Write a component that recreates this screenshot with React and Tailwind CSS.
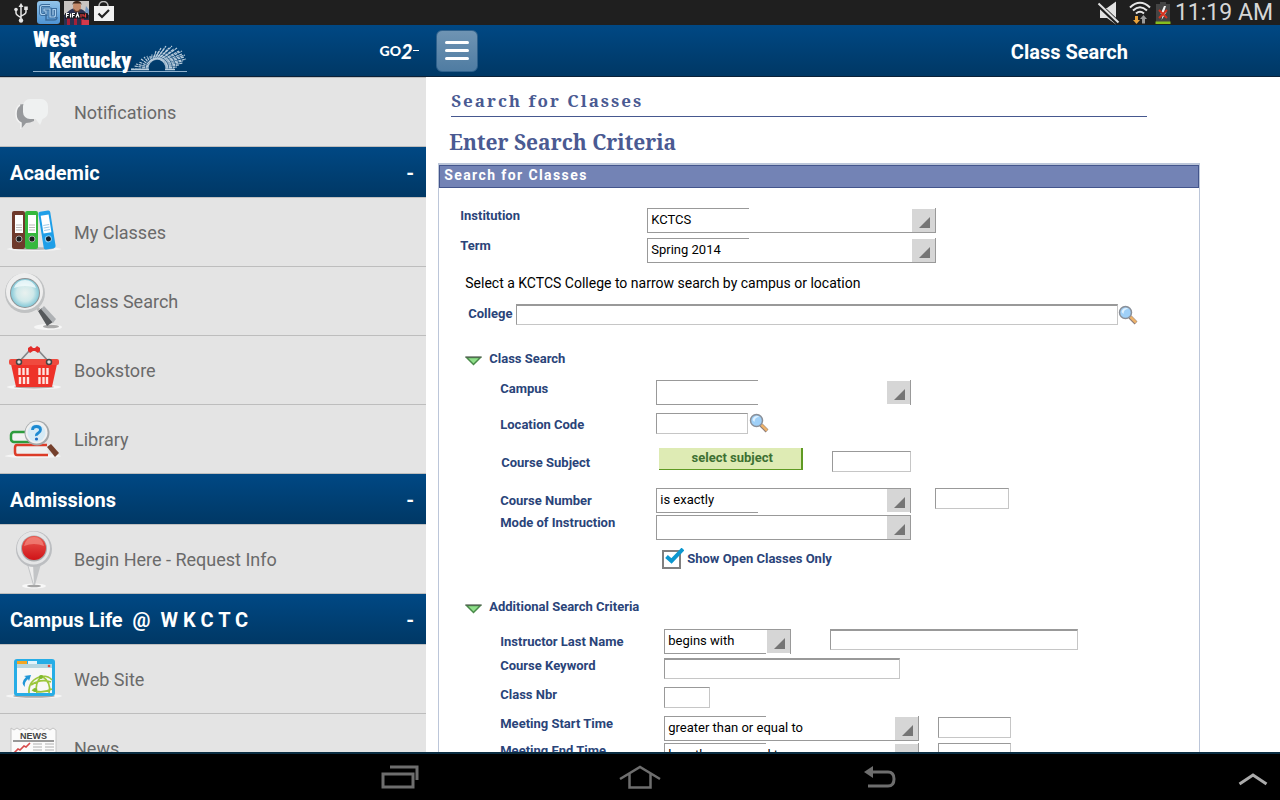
import React from 'react'

const barGradient = 'bg-linear-to-b from-[#004884] to-[#003865]'

/* ---------- status bar ---------- */

function StatusBar() {
  return (
    <div className="flex h-[25px] shrink-0 items-center justify-between overflow-hidden bg-[#1f1f1f] pl-3 pr-[7px]">
      <div className="flex items-center gap-1">
        <svg width="18" height="22" viewBox="0 0 18 22" fill="none" stroke="#e6e6e6" strokeWidth="1.5">
          <path d="M9 4v14M4 8v3q0 2 5 4.500M14 7v3q0 2-5 4" />
          <path d="M9 1l2.500 4h-5z" fill="#e6e6e6" stroke="none" />
          <circle cx="9" cy="18.500" r="2.200" fill="#e6e6e6" stroke="none" />
          <circle cx="4" cy="7.500" r="1.800" fill="#e6e6e6" stroke="none" />
          <path d="M12.200 4.500h3.600v3.600h-3.600z" fill="#e6e6e6" stroke="none" />
        </svg>
        <svg width="26" height="24" viewBox="0 0 26 24" className="ml-0.5">
          <defs>
            <linearGradient id="cu" x1="0" y1="0" x2="0" y2="1">
              <stop offset="0" stopColor="#94c5ea" />
              <stop offset="1" stopColor="#4d93d3" />
            </linearGradient>
          </defs>
          <rect x="1" y="0" width="23" height="23" rx="3" fill="url(#cu)" />
          <path d="M14 4.500H6.500a2 2 0 0 0-2 2v5a2 2 0 0 0 2 2H10V10H8V8h6v8h3.500a2 2 0 0 0 2-2V8.500H17V14" fill="none" stroke="#3b6d9e" strokeWidth="3" />
          <path d="M14 4.500H6.500a2 2 0 0 0-2 2v5a2 2 0 0 0 2 2H10V10H8V8h6v8h3.500a2 2 0 0 0 2-2V8.500H17V14" fill="none" stroke="#a9cfee" strokeWidth="1.200" />
          <path d="M10 13v6h8a3 3 0 0 0 3-3" fill="none" stroke="#3b6d9e" strokeWidth="1.500" />
        </svg>
        <svg width="25" height="24" viewBox="0 0 25 24" className="-ml-0.5">
          <rect width="25" height="24" fill="#c9c5c2" />
          <path d="M0 14l6-5 6-3 7 3 6 5v10H0z" fill="#2b3150" />
          <path d="M3 15h3v9H3zM10 17h3v7h-3zM17 16h3v8h-3z" fill="#a3213a" />
          <ellipse cx="13" cy="5.500" rx="4" ry="5.500" fill="#c48a6a" />
          <path d="M8.500 4q0-4 4.500-4t4.500 4l-1-1.500h-7z" fill="#3b2418" />
          <path d="M10 8q3 4 6 0v2q-3 3-6 0z" fill="#5d3a28" />
          <rect x="1" y="12" width="23" height="5.500" fill="#15171d" />
          <path d="M2.500 16.500v-4H5M2.500 14.500h2M6.500 12.500v4M8.500 16.500v-4H11M8.500 14.500h2M12 16.500l1.500-4 1.500 4" fill="none" stroke="#fff" strokeWidth="1.200" />
          <path d="M17 13v3.500M19 13v2h2.500v-2.500v4" fill="none" stroke="#e53b3b" strokeWidth="1.200" />
          <path d="M18 19h7v5h-7z" fill="#d43a4c" />
          <path d="M22 5l3 4v4l-4-2z" fill="#6f95c0" />
        </svg>
        <svg width="22" height="24" viewBox="0 0 22 24">
          <path d="M6 7V5a4.500 4.500 0 0 1 9 0v2" fill="none" stroke="#bdbdbd" strokeWidth="1.500" />
          <path d="M1 5h20v15H1z" fill="#f2f2f2" />
          <path d="M5.500 12.500l3.500 3.500 7-7" fill="none" stroke="#222" strokeWidth="2.200" />
        </svg>
      </div>
      <div className="flex items-center gap-1">
        <svg width="24" height="24" viewBox="0 0 24 24" className="mr-1">
          <path d="M3 7h7l9-6.500v23L10 17H3z" fill="#e2e2e2" />
          <path d="M1 3l20 19" stroke="#1f1f1f" strokeWidth="5" />
          <path d="M1.500 2.500l20 19" stroke="#e2e2e2" strokeWidth="2" />
        </svg>
        <svg width="22" height="24" viewBox="0 0 22 24" fill="none" stroke="#e6e6e6" strokeWidth="2">
          <path d="M1 6.500q10-9.500 20 0M4 9.500q7-6.500 14 0M7 12.500q4-3.500 8 0" />
          <path d="M6 15h3v4h2l-3.500 4L4 19h2z" fill="#e9a23b" stroke="none" />
          <path d="M13 22.500h3V18h2l-3.500-4-3.500 4h2z" fill="#9b9b9b" stroke="none" />
        </svg>
        <svg width="16" height="24" viewBox="0 0 16 24">
          <path d="M5 1h6v2h4v20H1V3h4z" fill="#444" />
          <path d="M0.500 20.500h15v2.500h-15z" fill="#85bd1f" />
          <path d="M9 5L5.500 13H8l-1.500 6 5-8H9l2-6z" fill="#f4f4f4" />
          <path d="M4 9l8 8M12 9l-8 8" stroke="#d8321e" strokeWidth="2" />
        </svg>
        <span className="text-[23px] leading-6 text-[#d6d6d6]">11:19 AM</span>
      </div>
    </div>
  )
}

/* ---------- top bar ---------- */

// outline of the sunburst, from the left tip over the top to the right foot
const fanEdge = [
  [0, 24], [3, 21], [5, 19], [8, 17], [10, 14], [13, 12], [16, 11], [19, 11], [21, 9], [24, 9],
  [25, 6], [28, 6], [30, 3], [33, 4], [35, 1], [38, 3], [41, 1], [43, 4], [46, 3], [48, 6],
  [51, 6], [51, 9], [54, 10], [53, 12], [55, 14], [52, 16], [52, 18], [48, 20], [46, 22], [43, 24],
]

function SunFan() {
  return (
    <svg width="56" height="26" viewBox="0 0 56 26" stroke="#b9cddd">
      {fanEdge.map(([x, y], i) => {
        const a = Math.PI * (1 - i / (fanEdge.length - 1))
        return (
          <line key={i} x1={26 + Math.cos(a) * 8.5} y1={24 - Math.sin(a) * 9.5} x2={x} y2={y} strokeWidth="1.200" strokeDasharray="3 0.600" />
        )
      })}
      <path d="M0 24.500h18M34 24.500h10" strokeWidth="1.500" />
    </svg>
  )
}

function TopBar() {
  return (
    <header className={`flex h-[52px] shrink-0 items-center border-b border-[#0b2138] ${barGradient}`}>
      <div className="flex w-1/3 items-center justify-between pl-[33px] pr-2">
        <div className="flex items-end border-b border-[#8fb0cc] text-white">
          <div className="font-['Impact','Liberation_Sans_Narrow','Roboto_Condensed',Roboto,sans-serif] text-[22px] font-black leading-[21px]">
            <div>West</div>
            <div className="pl-4">Kentucky</div>
          </div>
          <SunFan />
        </div>
        <div className="flex items-center font-['Lato',sans-serif] text-white">
          <span className="text-sm font-black">GO</span>
          <span className="text-xl font-black italic leading-5">2</span>
          <span className="w-1.5 border-b border-white" />
        </div>
      </div>
      <div className="flex flex-1 items-center justify-between pl-[9px] pr-[152px]">
        <button aria-label="Menu" className="flex size-[42px] flex-col items-center justify-center gap-[5px] rounded-md border border-[#2f618c] bg-linear-to-b from-[#6f94b3] to-[#4f7ca2]">
          <span className="h-[3px] w-6 rounded-sm bg-white" />
          <span className="h-[3px] w-6 rounded-sm bg-white" />
          <span className="h-[3px] w-6 rounded-sm bg-white" />
        </button>
        <h1 className="pt-0.5 text-xl font-bold text-white">Class Search</h1>
      </div>
    </header>
  )
}

/* ---------- sidebar icons, all drawn on a 68x68 box ---------- */

const icons = {
  chat: (
    <g transform="translate(0 8)">
      <path d="M16 25q0-8 8-8h6v15h4v2q-4 2-8 2l-5 6v-6q-5-2-5-11z" fill="#97999c" />
      <path d="M21 42v-6q-5-2-5-9q0-7 4-9" fill="none" stroke="#f4f4f4" strokeWidth="1.500" />
      <rect x="23" y="12" width="25" height="20" rx="7" fill="#eff1f1" />
      <path d="M35 31h8l-3 7z" fill="#eff1f1" />
    </g>
  ),
  binders: (
    <>
      <ellipse cx="34" cy="50" rx="27" ry="2" fill="#f3f3f3" />
      <ellipse cx="34" cy="49.500" rx="20" ry="1.500" fill="#b5b5b5" />
      <rect x="12" y="12" width="13" height="38" rx="2" fill="#6f3a2c" />
      <rect x="15" y="16" width="8" height="18" fill="#fff" />
      <rect x="25" y="12" width="13" height="38" rx="2" fill="#35b83d" />
      <rect x="28" y="16" width="8" height="18" fill="#fff" />
      <path d="M16 26h6M16 28.500h6M16 31h6M29 26h6M29 28.500h6M29 31h6" stroke="#bbb" />
      <g transform="rotate(-9 47 31)">
        <rect x="41" y="12" width="12" height="38" rx="2" fill="#1f9fe8" />
        <rect x="43" y="16" width="8" height="18" fill="#fff" />
        <path d="M44 26h6M44 28.500h6M44 31h6" stroke="#9fc9e6" />
        <circle cx="47" cy="40" r="3" fill="#14202a" stroke="#8fd0f5" />
      </g>
      <circle cx="19" cy="40" r="3" fill="#1c1c1c" stroke="#aaa" />
      <circle cx="32" cy="40" r="3" fill="#1c1c1c" stroke="#aaa" />
    </>
  ),
  magnifier: (
    <>
      <ellipse cx="48" cy="59" rx="14" ry="3" fill="#f6f6f6" />
      <ellipse cx="51" cy="58.500" rx="8" ry="1.800" fill="#aaa" />
      <path d="M38 43l4-3 11 14-6 4z" fill="#55585b" />
      <path d="M41 41l3-3 12 13-3 4z" fill="#aeb1b4" />
      <path d="M35 37l4 5" stroke="#bbb" strokeWidth="3" />
      <circle cx="25" cy="25" r="20" fill="#c0c2c3" />
      <circle cx="24.500" cy="23.500" r="18.500" fill="#eeeeee" />
      <circle cx="25" cy="25" r="15" fill="#8d9193" />
      <circle cx="25" cy="25" r="14" fill="url(#glass)" />
      <path d="M14 20q3-8 11-8t11 8q-11-4-22 0z" fill="#f2fbfc" opacity="0.800" />
    </>
  ),
  basket: (
    <g transform="translate(0 3)">
      <ellipse cx="34" cy="47" rx="27" ry="2.500" fill="#f5f5f5" />
      <ellipse cx="34" cy="47" rx="20" ry="1.500" fill="#b3a5a5" />
      <path d="M19 22L30 10M49 22L38 10" stroke="#85888a" strokeWidth="1.800" />
      <path d="M28 8l3-2 2 2h2l2-2 3 2v3l-2 2-3-2h-2l-3 2-2-2z" fill="#e22d2a" />
      <path d="M11 24h46l-5 23H16z" fill="#ee3229" />
      <rect x="9" y="19" width="50" height="6" rx="2" fill="#f04a3e" />
      <path d="M19.500 28v7M23.500 28v7M27.500 28v7M39.500 28v7M43.500 28v7M47.500 28v7M20 37v7M24 37v7M28 37v7M39.500 37v7M43.500 37v7M47 37v7" stroke="#ffe4e0" strokeWidth="2.400" />
      <circle cx="19" cy="22" r="2.500" fill="#ddd" stroke="#454545" strokeWidth="1.500" />
      <circle cx="49" cy="22" r="2.500" fill="#ddd" stroke="#454545" strokeWidth="1.500" />
    </g>
  ),
  library: (
    <g transform="translate(0 3)">
      <ellipse cx="33" cy="47" rx="28" ry="2" fill="#f5f5f5" />
      <rect x="11" y="23" width="26" height="10" rx="3" fill="#f2f2f2" stroke="#2d9c3d" strokeWidth="2.500" />
      <path d="M47 36H17q-2 0-2 3v4q0 3 2 3h31" fill="#efefef" stroke="#dc3c28" strokeWidth="2.500" />
      <path d="M47 38l4-3 8 9-4 4z" fill="#75402c" />
      <circle cx="37" cy="24" r="12.500" fill="#a5a9ab" />
      <circle cx="36.500" cy="23.500" r="11" fill="#f0f0f0" />
      <circle cx="36.500" cy="24" r="9" fill="#d5eaf5" />
      <path d="M32.500 21q0-3.500 4-3.500t4 3.200q0 2-2.200 3.200t-1.800 3" fill="none" stroke="#1d8ad2" strokeWidth="2.800" />
      <circle cx="36.500" cy="30" r="1.600" fill="#1d6fc2" />
    </g>
  ),
  pin: (
    <>
      <ellipse cx="34" cy="60" rx="12" ry="2.500" fill="#f8f8f8" />
      <ellipse cx="34" cy="60" rx="7" ry="1.300" fill="#a5a5a5" />
      <path d="M27 38h14l-6 21h-2z" fill="#c2c4c6" />
      <path d="M28 38h5l1 21z" fill="#eeeeee" />
      <circle cx="34" cy="23" r="18" fill="#bcbec1" />
      <circle cx="33.500" cy="22" r="16.500" fill="#e4e5e6" />
      <circle cx="34" cy="22.500" r="13" fill="#a8abad" />
      <circle cx="34" cy="22" r="12" fill="url(#pinred)" />
      <path d="M24 20q2-9 10-9t10 9q-10-4-20 0z" fill="#f48a80" opacity="0.700" />
    </>
  ),
  web: (
    <g transform="translate(0 1)">
      <ellipse cx="34" cy="49" rx="28" ry="2.500" fill="#f5f5f5" />
      <ellipse cx="34" cy="49" rx="21" ry="1.800" fill="#a9a9a9" />
      <rect x="14" y="12" width="41" height="37" rx="3" fill="#27ade6" />
      <rect x="17" y="14" width="10" height="3" fill="#f4a623" />
      <rect x="28" y="14" width="9" height="3" fill="#e3f4fb" />
      <rect x="17" y="17" width="35" height="4" fill="#b7d5df" />
      <rect x="17" y="21" width="35" height="25" fill="#f7f7f7" />
      <circle cx="49" cy="19" r="1.300" fill="#e2483c" />
      <g fill="none" stroke="#9cc63c" strokeWidth="1.700">
        <path d="M29 46q-1-13 13-17q7 0 10 4M31 38q10-7 20-3M37 46q-3-10 5-17q10 7 7 17M32 43q10 4 20-1" />
      </g>
      <path d="M25 40q-5-4 1-10l-2-1 7-1-2 6-1-2q-4 3-3 8z" fill="#2196d6" />
      <circle cx="41" cy="30" r="2" fill="#7fb92e" />
      <circle cx="35" cy="43" r="2" fill="#7fb92e" />
    </g>
  ),
  news: (
    <>
      <path d="M11 13l3 2 3-2 3 2 3-2 3 2 3-2 3 2 3-2 3 2 3-2 3 2 3-2 3 2 3-2 3 2v50H11z" fill="#fbfbfb" stroke="#c4c4c4" />
      <text x="20" y="24" fontSize="9" fontWeight="700" fontFamily="Liberation Sans, Arial, sans-serif" fill="#444">NEWS</text>
      <path d="M13 26h41" stroke="#777" strokeWidth="1.500" />
      <path d="M33 29h9M33 32h9M33 35h9M33 38h9M45 29h9M45 32h9M45 35h9M45 38h9" stroke="#c9c9c9" strokeWidth="1.500" />
      <path d="M14 38l4-4 2 1 4-4 2 1 4-4" fill="none" stroke="#d64a4a" strokeWidth="1.600" />
    </>
  ),
}

const sections = [
  { items: [{ icon: 'chat', text: 'Notifications' }] },
  {
    title: 'Academic',
    items: [
      { icon: 'binders', text: 'My Classes' },
      { icon: 'magnifier', text: 'Class Search' },
      { icon: 'basket', text: 'Bookstore' },
      { icon: 'library', text: 'Library' },
    ],
  },
  { title: 'Admissions', items: [{ icon: 'pin', text: 'Begin Here - Request Info' }] },
  {
    title: 'Campus Life  @  W K C T C',
    items: [
      { icon: 'web', text: 'Web Site' },
      { icon: 'news', text: 'News' },
    ],
  },
]

function Sidebar() {
  return (
    <nav className="w-[33.3%] shrink-0 overflow-hidden bg-[#e4e4e4]">
      <svg width="0" height="0" className="absolute">
        <defs>
          <radialGradient id="glass">
            <stop offset="0" stopColor="#e9f1ef" />
            <stop offset="0.600" stopColor="#d0e9ea" />
            <stop offset="1" stopColor="#86c9d8" />
          </radialGradient>
          <linearGradient id="pinred" x1="0" y1="0" x2="0" y2="1">
            <stop offset="0" stopColor="#ea5a50" />
            <stop offset="1" stopColor="#d01318" />
          </linearGradient>
        </defs>
      </svg>
      {sections.map((section, i) => (
        <div key={i}>
          {section.title && (
            <button className={`flex h-[50px] w-full items-center justify-between px-2.5 pr-3 pt-0.5 text-xl font-bold text-white ${barGradient}`}>
              <span className="whitespace-pre">{section.title}</span>
              <span>-</span>
            </button>
          )}
          <ul className="border-t border-[#c0c0c0]">
            {section.items.map((item) => (
              <li key={item.text} className="h-[69px] border-b border-[#bdbdbd]">
                <a href="#" className="flex h-full items-center text-lg text-[#6a6a6a]">
                  <svg width="68" height="68" viewBox="0 -1 68 68" className="shrink-0">
                    {icons[item.icon]}
                  </svg>
                  <span className="pl-1.5 pt-0.5">{item.text}</span>
                </a>
              </li>
            ))}
          </ul>
        </div>
      ))}
    </nav>
  )
}

/* ---------- form pieces ---------- */

const labelClass = 'shrink-0 text-[13px] font-bold leading-4 text-[#2a4479]'

function Lookup() {
  return (
    <button type="button" aria-label="Look up" className="shrink-0">
      <svg width="20" height="20" viewBox="0 0 20 20">
        <path d="M12 12l6 6" stroke="#8c7b78" strokeWidth="4" />
        <path d="M12 11.500l6 6" stroke="#eeb36a" strokeWidth="2.500" />
        <circle cx="7.500" cy="7.500" r="6" fill="#9fd0f8" stroke="#8a8f98" strokeWidth="1.500" />
        <path d="M3.500 7q1-4 5-4l2 1q-5 0-5 5z" fill="#e0f2ff" />
      </svg>
    </button>
  )
}

function Select({ id, value, width, top = 'part', bottom = 'full' }) {
  return (
    <div className={`relative h-[25px] shrink-0 border-x border-[#999] ${width}`}>
      <select id={id} defaultValue={value} className="block h-full w-full appearance-none bg-white pb-0.5 pl-[3px] text-[13px] leading-5 text-black outline-none">
        <option>{value}</option>
      </select>
      <span className="pointer-events-none absolute bottom-px right-0 top-px w-[23px] bg-[#d6d6d6]">
        <svg width="23" height="23" viewBox="0 0 23 23">
          <path d="M18 8v11H7z" fill="#757575" />
        </svg>
      </span>
      <span className={`absolute left-0 top-0 h-px bg-[#999] ${top === 'full' ? 'w-full' : 'w-[101px]'}`} />
      {bottom === 'full' && <span className="absolute bottom-0 left-0 h-px w-full bg-[#999]" />}
      {bottom === 'part' && <span className="absolute bottom-0 left-0 h-px w-[101px] bg-[#999]" />}
    </div>
  )
}

function TextBox({ id, label, className }) {
  return (
    <input
      id={id}
      type="text"
      aria-label={label}
      className={`h-[21px] border border-b-[#c6c6c6] border-l-[#999] border-r-[#c6c6c6] border-t-[#999] bg-white px-1 text-[13px] outline-none ${className}`}
    />
  )
}

function Row({ id, label, labelWidth, labelPad = '', className, children }) {
  return (
    <div className={`flex items-start ${className}`}>
      <label htmlFor={id} className={`${labelClass} ${labelWidth} ${labelPad}`}>{label}</label>
      {children}
    </div>
  )
}

function GroupTitle({ children, className }) {
  return (
    <h3 className={`flex items-center gap-[7px] pl-[26px] ${labelClass} ${className}`}>
      <svg width="17" height="16" viewBox="0 0 17 16">
        <path d="M1.500 6.500h14L8.500 13.500z" fill="#8fe08a" stroke="#4a8a4a" strokeWidth="1.500" />
        <path d="M0.500 6h16" stroke="#555" />
      </svg>
      {children}
    </h3>
  )
}

function SearchForm() {
  return (
    <main className="flex-1 overflow-hidden bg-white pl-3 pr-20">
      <h2 className="ml-[13px] mr-[53px] border-b border-[#46588f] pb-[3px] pt-3 font-['Noto_Serif','Droid_Serif','DejaVu_Serif',serif] text-[17px] font-bold leading-6 tracking-[2px] text-[#4a5a92]">
        Search for Classes
      </h2>
      <h2 className="ml-[11px] pb-2 pt-3 font-['Noto_Serif','Droid_Serif','DejaVu_Serif',serif] text-[21px] font-bold leading-[26px] text-[#4a5a92]">
        Enter Search Criteria
      </h2>

      <form className="border-x border-t-2 border-[#bcc6d9] pb-4">
        <h3 className="h-[23px] border border-[#43558c] bg-[#7383b5] px-1 text-sm font-bold leading-[18px] tracking-widest text-white">
          Search for Classes
        </h3>

        <Row id="institution" label="Institution" labelWidth="w-[187px]" className="mt-5 pl-[21px]">
          <Select id="institution" value="KCTCS" width="w-[289px]" />
        </Row>
        <Row id="term" label="Term" labelWidth="w-[187px]" className="mt-[5px] pl-[21px]">
          <Select id="term" value="Spring 2014" width="w-[289px]" />
        </Row>

        <p className="mt-2.5 pl-[26px] text-sm leading-5 text-black">
          Select a KCTCS College to narrow search by campus or location
        </p>

        <div className="mt-[11px] flex items-center pl-[29px] pr-[61px]">
          <label htmlFor="college" className={`${labelClass} w-12 pb-0.5`}>College</label>
          <TextBox id="college" className="min-w-0 flex-1 border-t-2" />
          <Lookup />
        </div>

        <GroupTitle className="mt-[26px]">Class Search</GroupTitle>
        <Row id="campus" label="Campus" labelWidth="w-[156px]" labelPad="pt-px" className="mt-[13px] pl-[61px]">
          <Select id="campus" value="" width="w-[255px]" bottom="part" />
        </Row>
        <Row id="location" label="Location Code" labelWidth="w-[156px]" labelPad="pt-1" className="mt-2 pl-[61px]">
          <TextBox id="location" className="mr-px w-[92px]" />
          <Lookup />
        </Row>
        <Row id="subject" label="Course Subject" labelWidth="w-[156px]" labelPad="pt-[7px]" className="mt-[14px] pl-[62px]">
          <button type="button" className="ml-0.5 h-[22px] w-36 border-b border-r-2 border-[#5f9a23] bg-[#deebb4] pb-0.5 pl-1 text-[13px] font-bold leading-[18px] text-[#3d7032]">
            select subject
          </button>
          <TextBox id="subject" className="ml-[29px] mt-[3px] w-[79px]" />
        </Row>
        <Row id="number" label="Course Number" labelWidth="w-[156px]" labelPad="pt-[5px]" className="mt-4 pl-[61px]">
          <Select id="number" value="is exactly" width="w-[255px]" top="full" bottom="part" />
          <TextBox label="Course number value" className="ml-6 w-[74px]" />
        </Row>
        <Row id="mode" label="Mode of Instruction" labelWidth="w-[156px]" className="mt-0.5 pl-[61px]">
          <Select id="mode" value="" width="w-[255px]" top="full" />
        </Row>
        <div className="mt-[7px] flex h-[23px] items-center gap-[3px] pl-[223px]">
          <span className="relative size-[22px]">
            <input id="open" type="checkbox" defaultChecked className="mt-0.5 block size-[19px] appearance-none border-2 border-[#808080] bg-white" />
            <svg width="22" height="22" viewBox="0 0 22 22" className="pointer-events-none absolute left-0 top-0">
              <path d="M4.500 8.500l5 4.500 11.500-12" fill="none" stroke="#0c97cf" strokeWidth="4" />
            </svg>
          </span>
          <label htmlFor="open" className={labelClass}>Show Open Classes Only</label>
        </div>

        <GroupTitle className="mt-[29px]">Additional Search Criteria</GroupTitle>
        <Row id="instructor" label="Instructor Last Name" labelWidth="w-[164px]" labelPad="pt-[5px]" className="mt-[14px] pl-[61px]">
          <Select id="instructor" value="begins with" width="w-[127px]" top="full" bottom="part" />
          <TextBox label="Instructor last name value" className="ml-[39px] w-[248px] border-t-2" />
        </Row>
        <Row id="keyword" label="Course Keyword" labelWidth="w-[164px]" className="mt-1 pl-[61px]">
          <TextBox id="keyword" className="w-[236px] border-t-2" />
        </Row>
        <Row id="nbr" label="Class Nbr" labelWidth="w-[164px]" className="mt-2 pl-[61px]">
          <TextBox id="nbr" className="w-[46px]" />
        </Row>
        <Row id="start" label="Meeting Start Time" labelWidth="w-[164px]" className="mt-2 pl-[61px]">
          <Select id="start" value="greater than or equal to" width="w-[255px]" />
          <TextBox label="Meeting start time value" className="ml-[19px] mt-px w-[73px]" />
        </Row>
        <Row id="end" label="Meeting End Time" labelWidth="w-[164px]" className="mt-0.5 pl-[61px]">
          <Select id="end" value="less than or equal to" width="w-[255px]" />
          <TextBox label="Meeting end time value" className="ml-[19px] w-[73px]" />
        </Row>
      </form>
    </main>
  )
}

/* ---------- bottom bar ---------- */

function NavBar() {
  return (
    <footer className="grid h-12 shrink-0 grid-cols-[1fr_240px_240px_240px_1fr] items-center border-t-2 border-[#0a2d42] bg-black">
      <button aria-label="Recent apps" className="col-start-2 justify-self-center">
        <svg width="38" height="24" viewBox="0 0 38 24" fill="none" stroke="#6e6e6e" strokeWidth="3">
          <path d="M2 9h30v13H2zM9 2h27v13" />
        </svg>
      </button>
      <button aria-label="Home" className="justify-self-center">
        <svg width="44" height="24" viewBox="0 0 44 24" fill="none" stroke="#6e6e6e" strokeWidth="2.500">
          <path d="M2 14L22 2l20 12M11.500 9v13.500h21V9" />
        </svg>
      </button>
      <button aria-label="Back" className="justify-self-center">
        <svg width="34" height="24" viewBox="0 0 34 24" fill="none" stroke="#6e6e6e" strokeWidth="3">
          <path d="M6 7h19q6 0 6 7t-6 7H5" />
          <path d="M10 1v12L1 7z" fill="#6e6e6e" stroke="none" />
        </svg>
      </button>
      <button aria-label="Show tray" className="mr-3 justify-self-end pt-1">
        <svg width="30" height="14" viewBox="0 0 30 14" fill="none" stroke="#ababab" strokeWidth="3">
          <path d="M1.500 12L15 3l13.500 9" />
        </svg>
      </button>
    </footer>
  )
}

function App() {
  return (
    <div className="flex h-screen flex-col overflow-hidden bg-black font-[Roboto,'Liberation_Sans',sans-serif]">
      <StatusBar />
      <TopBar />
      <div className="flex min-h-0 flex-1">
        <Sidebar />
        <SearchForm />
      </div>
      <NavBar />
    </div>
  )
}

export default App
